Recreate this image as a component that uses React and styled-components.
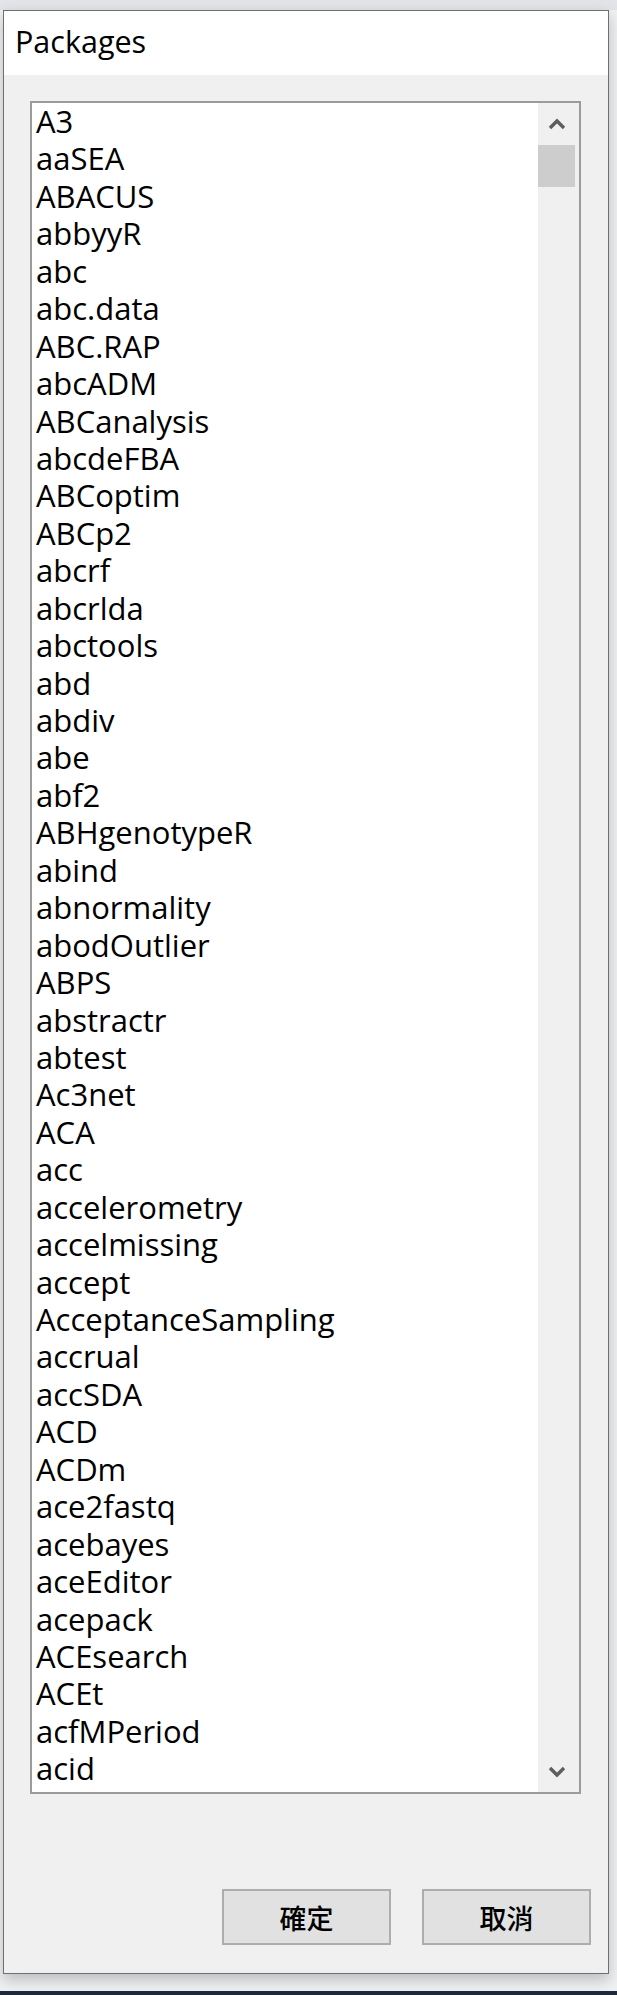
import React from "react";
import styled, { createGlobalStyle } from "styled-components";

const packages = [
  "A3", "aaSEA", "ABACUS", "abbyyR", "abc", "abc.data", "ABC.RAP", "abcADM",
  "ABCanalysis", "abcdeFBA", "ABCoptim", "ABCp2", "abcrf", "abcrlda", "abctools",
  "abd", "abdiv", "abe", "abf2", "ABHgenotypeR", "abind", "abnormality",
  "abodOutlier", "ABPS", "abstractr", "abtest", "Ac3net", "ACA", "acc",
  "accelerometry", "accelmissing", "accept", "AcceptanceSampling", "accrual",
  "accSDA", "ACD", "ACDm", "ace2fastq", "acebayes", "aceEditor", "acepack",
  "ACEsearch", "ACEt", "acfMPeriod", "acid",
];

const GlobalStyle = createGlobalStyle`
  html, body {
    margin: 0;
    padding: 0;
    background: #eef0f2;
  }
  * {
    box-sizing: border-box;
  }
`;

const Desktop = styled.div`
  width: 617px;
  height: 1995px;
  display: flex;
  flex-direction: column;
  background: linear-gradient(#e2e4e7 0 10px, #f0f1f2 10px);
  overflow: hidden;
`;

const Window = styled.div`
  margin: 10px 0 0 3px;
  width: 606px;
  height: 1964px;
  display: flex;
  flex-direction: column;
  border: 1px solid #6f6f6f;
  background: #f0f0f0;
  box-shadow: 0 6px 14px rgba(0, 0, 0, 0.22);
`;

const TitleBar = styled.div`
  height: 64px;
  background: #ffffff;
  padding: 0 0 4px 11px;
  display: flex;
  align-items: center;
  font-family: "Open Sans", "Liberation Sans", sans-serif;
  font-size: 30.5px;
  color: #000;
`;

const Body = styled.div`
  flex: 1;
  display: flex;
  flex-direction: column;
  padding: 26px 17px 28px 26px;
`;

const ListBox = styled.div`
  height: 1693px;
  margin-right: 10px;
  display: flex;
  border: 2px solid #9b9b9b;
  background: #ffffff;
`;

const Items = styled.ul`
  flex: 1;
  margin: 0;
  padding: 0;
  list-style: none;
`;

const Item = styled.li`
  height: 37.45px;
  line-height: 37.45px;
  padding-left: 4px;
  font-family: "Open Sans", "Liberation Sans", sans-serif;
  font-size: 31px;
  color: #000;
  white-space: nowrap;
`;

const ScrollBar = styled.div`
  width: 41px;
  display: flex;
  flex-direction: column;
  background: #f0f0f0;
`;

const ArrowButton = styled.div`
  height: ${(p) => p.$h}px;
  display: flex;
  align-items: center;
  justify-content: center;
  padding-right: 3px;
`;

const Thumb = styled.div`
  height: 42px;
  width: 37px;
  background: #cdcdcd;
`;

const Track = styled.div`
  flex: 1;
`;

const Buttons = styled.div`
  margin-top: auto;
  display: flex;
  justify-content: flex-end;
  gap: 31px;
`;

const Button = styled.button`
  width: 169px;
  height: 56px;
  border: 2px solid #adadad;
  background: #e1e1e1;
  font-family: "Noto Sans CJK TC", "Noto Sans CJK SC", sans-serif;
  font-size: 27px;
  font-weight: 500;
  color: #000;
  padding: 0;
  display: flex;
  align-items: center;
  justify-content: center;
`;

const Taskbar = styled.div`
  margin-top: auto;
  height: 4px;
  background: #1d2a3a;
`;

function Chevron({ up }) {
  return (
    <svg width="18" height="12" viewBox="0 0 18 12">
      <polyline
        points={up ? "2,10 9,3 16,10" : "2,2 9,9 16,2"}
        fill="none"
        stroke="#5f5f5f"
        strokeWidth="3.4"
      />
    </svg>
  );
}

export default function App() {
  return (
    <>
      <GlobalStyle />
      <Desktop>
        <Window>
          <TitleBar>Packages</TitleBar>
          <Body>
            <ListBox>
              <Items>
                {packages.map((name) => (
                  <Item key={name}>{name}</Item>
                ))}
              </Items>
              <ScrollBar>
                <ArrowButton $h={42}>
                  <Chevron up />
                </ArrowButton>
                <Thumb />
                <Track />
                <ArrowButton $h={40}>
                  <Chevron />
                </ArrowButton>
              </ScrollBar>
            </ListBox>
            <Buttons>
              <Button>確定</Button>
              <Button>取消</Button>
            </Buttons>
          </Body>
        </Window>
        <Taskbar />
      </Desktop>
    </>
  );
}
